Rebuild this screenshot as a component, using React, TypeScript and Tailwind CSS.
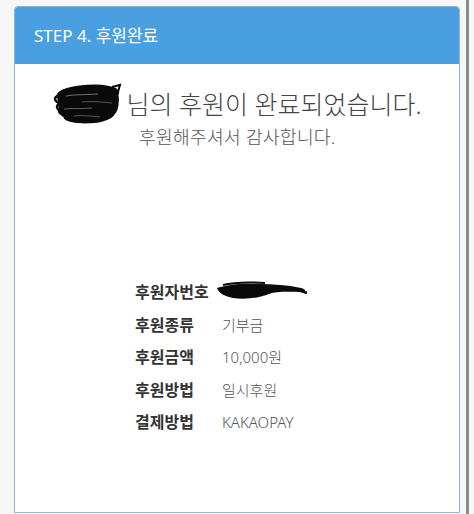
const ko = '"Noto Sans", "Noto Sans CJK KR", sans-serif'

const rows: { label: string; value: string | null }[] = [
  { label: '후원자번호', value: null },
  { label: '후원종류', value: '기부금' },
  { label: '후원금액', value: '10,000원' },
  { label: '후원방법', value: '일시후원' },
  { label: '결제방법', value: 'KAKAOPAY' },
]

function NameScribble() {
  const loops = [
    { cx: 36, cy: 12, rx: 30, ry: 8, r: -3 },
    { cx: 34, cy: 18, rx: 31, ry: 8, r: 2 },
    { cx: 35, cy: 24, rx: 30, ry: 9, r: -2 },
    { cx: 34, cy: 30, rx: 27, ry: 8, r: 3 },
    { cx: 33, cy: 35, rx: 20, ry: 5, r: -1 },
  ]
  return (
    <svg width="70" height="44" viewBox="0 0 70 44" className="shrink-0">
      <path
        d="M10 8 C24 3 48 3 64 6 C68 12 67 20 66 26 C64 34 56 40 42 41 C28 42 16 40 10 34 C6 28 6 20 5 14 C6 11 8 9 10 8 Z"
        fill="#0a0a0a"
      />
      {loops.map((l, i) => (
        <ellipse
          key={i}
          cx={l.cx}
          cy={l.cy}
          rx={l.rx}
          ry={l.ry}
          transform={`rotate(${l.r} ${l.cx} ${l.cy})`}
          fill="none"
          stroke="#0a0a0a"
          strokeWidth="2.6"
        />
      ))}
      <path d="M14 14 C24 12 36 13 46 12" stroke="#ffffff" strokeWidth="0.6" fill="none" opacity="0.7" />
      <path d="M30 20 C40 19 50 20 60 21" stroke="#ffffff" strokeWidth="0.6" fill="none" opacity="0.5" />
      <path d="M12 27 C22 26 30 27 40 26" stroke="#ffffff" strokeWidth="0.6" fill="none" opacity="0.6" />
      <path d="M22 34 C30 33 38 34 48 35" stroke="#ffffff" strokeWidth="0.6" fill="none" opacity="0.5" />
      <path d="M60 5 L68 3 L66 10" stroke="#0a0a0a" strokeWidth="2" fill="none" />
    </svg>
  )
}

function NumberScribble() {
  return (
    <svg width="94" height="22" viewBox="0 0 94 22" className="absolute left-0 top-[-4px]">
      <path
        d="M2 8 C14 4 30 3 44 4 C58 4 72 5 86 8 C90 9 92 11 88 12 C74 12 62 11 54 14 C44 18 30 20 18 18 C10 16 4 14 2 8 Z"
        fill="#0a0a0a"
      />
      <path d="M60 10 C70 8 82 9 92 13" stroke="#0a0a0a" strokeWidth="2.5" fill="none" />
      <path d="M8 5 C20 2 34 2 50 3" stroke="#0a0a0a" strokeWidth="2" fill="none" />
      <path d="M20 14 C30 16 40 15 50 12" stroke="#0a0a0a" strokeWidth="3" fill="none" />
    </svg>
  )
}

export default function App() {
  return (
    <div className="flex h-[514px] w-full bg-[#f6f6f6]" style={{ fontFamily: ko }}>
      <div className="ml-[14px] mt-[6px] flex h-[507px] w-[446px] flex-col overflow-hidden rounded-t-[4px] border border-[#8db9d2] bg-white">
        <div className="flex h-[57px] shrink-0 items-center bg-[#4a9fe0] px-[19px]">
          <span className="text-[17px] text-white">STEP 4. 후원완료</span>
        </div>
        <div className="flex flex-col items-center pt-[18px]">
          <div className="flex items-center">
            <NameScribble />
            <span className="ml-[4px] text-[25px] font-light leading-[32px] text-[#444]">님의 후원이 완료되었습니다.</span>
          </div>
          <div className="-mt-[1px] text-[18.5px] font-light leading-[24px] text-[#555]">후원해주셔서 감사합니다.</div>
        </div>
        <div className="mt-[127px] flex flex-col pl-[120px]">
          {rows.map((r) => (
            <div key={r.label} className="flex h-[32.5px] items-center">
              <span className="w-[87px] text-[16px] font-bold text-[#333]">{r.label}</span>
              {r.value ? (
                <span className="text-[15px] font-light text-[#555]">{r.value}</span>
              ) : (
                <span className="relative h-[16px] w-[94px] -ml-[7px]">
                  <NumberScribble />
                </span>
              )}
            </div>
          ))}
        </div>
      </div>
      <div className="ml-[6px] h-full w-[3px] bg-[#8a8a8a]" />
    </div>
  )
}
